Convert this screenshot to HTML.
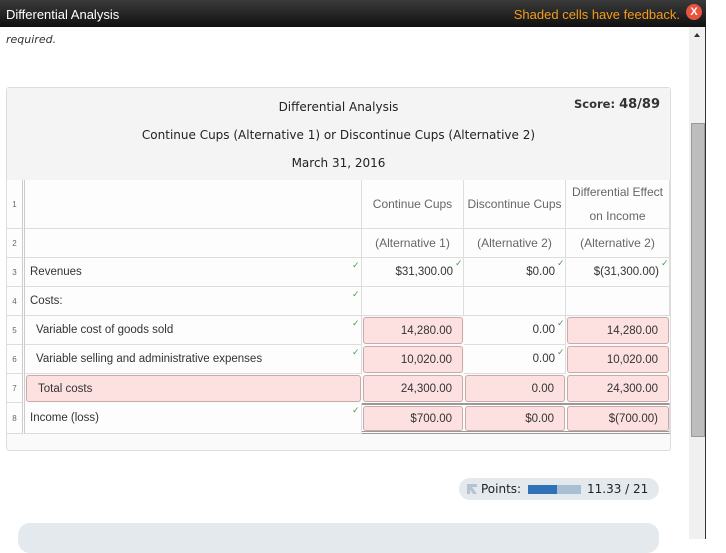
<!DOCTYPE html>
<html><head><style>
*{box-sizing:border-box;margin:0;padding:0}
body{width:726px;height:539px;background:#fff;font-family:"Liberation Sans",sans-serif;position:relative;overflow:hidden;color:#333}
.bar{position:absolute;left:0;top:0;width:706px;height:27px;background:linear-gradient(#3a3a3a,#111);color:#fff;font-size:13px}
.bar .t{position:absolute;left:6px;top:7px;font-size:13px}
.bar .f{position:absolute;right:26px;top:7px;color:#f39c1c;font-size:13px}
.bar .x{position:absolute;right:4px;top:4px;width:16px;height:16px;border-radius:50%;background:#e8533e;color:#fff;font-size:11px;text-align:center;line-height:16px;font-weight:bold}
.req{position:absolute;left:6px;top:33px;font-style:italic;color:#333;font-family:"DejaVu Sans",sans-serif;font-size:11px}
.sb{position:absolute;left:689px;top:27px;width:17px;height:512px;background:#f0f0f0;border-right:1px solid #333}
.sb .th{position:absolute;left:2px;top:96px;width:14px;height:314px;background:#bdbdbd;border:1px solid #999}
.sb .up{position:absolute;left:5px;top:6px;width:0;height:0;border-left:3px solid transparent;border-right:3px solid transparent;border-bottom:4px solid #333}
.panel{position:absolute;left:6px;top:87px;width:665px;height:364px;border:1px solid #ddd;border-radius:3px;background:#fafafa}
.hd{position:absolute;left:0;top:0;width:663px;height:93px;background:#f4f4f4;font-size:12px;color:#222;text-align:center;font-family:"DejaVu Sans",sans-serif}
.hd div{position:absolute;left:0;width:663px}
.score{position:absolute;right:10px;top:9px;font-size:11.5px;font-weight:bold;font-family:"DejaVu Sans",sans-serif}
.score b{font-size:13px}
.c{position:absolute;font-size:11.5px;color:#333;border-right:1px solid #ddd;border-bottom:1px solid #ddd;background:#fdfdfd;display:flex;align-items:center}
.n{font-size:8px;color:#666;justify-content:center;border-right:3px double #ccc}
.h{color:#666;justify-content:center;text-align:center;font-size:12px;line-height:24px}
.r{justify-content:flex-end;padding-right:10px}
.pk{background:#fde1e1;border:1px solid #c9a9a9;border-radius:3px}
.ck{position:absolute;color:#4a9a4a;font-size:9px}
.pts{position:absolute;left:459px;top:478px;width:200px;height:22px;border-radius:11px;background:#e3e9ed;font-size:12px;color:#222;font-family:"DejaVu Sans",sans-serif}
.bot{position:absolute;left:18px;top:523px;width:641px;height:30px;border-radius:12px;background:#e3e9ed}
</style></head><body>
<div class="bar"><span class="t">Differential Analysis</span><span class="f">Shaded cells have feedback.</span><span class="x">X</span></div>
<div class="req">required.</div>
<div class="sb"><div class="up"></div><div class="th"></div></div>
<div class="panel">
<div class="hd"><div style="top:12px">Differential Analysis</div><div style="top:40px">Continue Cups (Alternative 1) or Discontinue Cups (Alternative 2)</div><div style="top:68px">March 31, 2016</div></div>
<div class="score">Score: <b>48/89</b></div>
</div>
<div class="c n" style="left:7px;top:180px;width:18px;height:49px">1</div>
<div class="c" style="left:25px;top:180px;width:337px;height:49px"></div>
<div class="c h" style="left:362px;top:180px;width:102px;height:49px">Continue Cups</div>
<div class="c h" style="left:464px;top:180px;width:102px;height:49px">Discontinue Cups</div>
<div class="c h" style="left:566px;top:180px;width:104px;height:49px">Differential Effect<br>on Income</div>

<div class="c n" style="left:7px;top:229px;width:18px;height:29px">2</div>
<div class="c" style="left:25px;top:229px;width:337px;height:29px"></div>
<div class="c h" style="left:362px;top:229px;width:102px;height:29px">(Alternative 1)</div>
<div class="c h" style="left:464px;top:229px;width:102px;height:29px">(Alternative 2)</div>
<div class="c h" style="left:566px;top:229px;width:104px;height:29px">(Alternative 2)</div>

<div class="c n" style="left:7px;top:258px;width:18px;height:29px">3</div>
<div class="c" style="left:25px;top:258px;width:337px;height:29px;padding-left:5px">Revenues</div>
<div class="c r" style="left:362px;top:258px;width:102px;height:29px">$31,300.00</div>
<div class="c r" style="left:464px;top:258px;width:102px;height:29px">$0.00</div>
<div class="c r" style="left:566px;top:258px;width:104px;height:29px">$(31,300.00)</div>

<div class="c n" style="left:7px;top:287px;width:18px;height:29px">4</div>
<div class="c" style="left:25px;top:287px;width:337px;height:29px;padding-left:5px">Costs:</div>
<div class="c" style="left:362px;top:287px;width:102px;height:29px"></div>
<div class="c" style="left:464px;top:287px;width:102px;height:29px"></div>
<div class="c" style="left:566px;top:287px;width:104px;height:29px"></div>

<div class="c n" style="left:7px;top:316px;width:18px;height:29px">5</div>
<div class="c" style="left:25px;top:316px;width:337px;height:29px;padding-left:11px">Variable cost of goods sold</div>
<div class="c r pk" style="left:363px;top:317px;width:100px;height:27px">14,280.00</div>
<div class="c r" style="left:464px;top:316px;width:102px;height:29px">0.00</div>
<div class="c r pk" style="left:567px;top:317px;width:102px;height:27px">14,280.00</div>

<div class="c n" style="left:7px;top:345px;width:18px;height:29px">6</div>
<div class="c" style="left:25px;top:345px;width:337px;height:29px;padding-left:11px">Variable selling and administrative expenses</div>
<div class="c r pk" style="left:363px;top:346px;width:100px;height:27px">10,020.00</div>
<div class="c r" style="left:464px;top:345px;width:102px;height:29px">0.00</div>
<div class="c r pk" style="left:567px;top:346px;width:102px;height:27px">10,020.00</div>

<div class="c n" style="left:7px;top:374px;width:18px;height:29px">7</div>
<div class="c pk" style="left:26px;top:375px;width:335px;height:27px;padding-left:11px">Total costs</div>
<div class="c r pk" style="left:363px;top:375px;width:100px;height:27px">24,300.00</div>
<div class="c r pk" style="left:465px;top:375px;width:100px;height:27px">0.00</div>
<div class="c r pk" style="left:567px;top:375px;width:102px;height:27px">24,300.00</div>

<div class="c n" style="left:7px;top:403px;width:18px;height:31px">8</div>
<div class="c" style="left:25px;top:403px;width:337px;height:31px;padding-left:5px">Income (loss)</div>
<div class="c" style="left:362px;top:403px;width:308px;height:31px;border-top:2px solid #999;border-bottom:3px double #999"></div>
<div class="c r pk" style="left:363px;top:406px;width:100px;height:25px">$700.00</div>
<div class="c r pk" style="left:465px;top:406px;width:100px;height:25px">$0.00</div>
<div class="c r pk" style="left:567px;top:406px;width:102px;height:25px">$(700.00)</div>

<span class="ck" style="left:352px;top:260px">✓</span>
<span class="ck" style="left:352px;top:289px">✓</span>
<span class="ck" style="left:352px;top:318px">✓</span>
<span class="ck" style="left:352px;top:347px">✓</span>
<span class="ck" style="left:352px;top:405px">✓</span>
<span class="ck" style="left:455px;top:258px">✓</span>
<span class="ck" style="left:557px;top:258px">✓</span>
<span class="ck" style="left:661px;top:258px">✓</span>
<span class="ck" style="left:557px;top:318px">✓</span>
<span class="ck" style="left:557px;top:347px">✓</span>

<div class="pts">
<span style="position:absolute;left:8px;top:6px;width:10px;height:10px;background:#b5c3cf;clip-path:polygon(0 0,100% 0,100% 30%,50% 30%,100% 100%,60% 100%,30% 55%,30% 100%,0 100%)"></span>
<span style="position:absolute;left:22px;top:4px">Points:</span>
<span style="position:absolute;left:69px;top:7px;width:53px;height:9px;background:#a9c0d3"></span>
<span style="position:absolute;left:69px;top:7px;width:29px;height:9px;background:#2f72b8"></span>
<span style="position:absolute;left:128px;top:4px">11.33 / 21</span>
</div>
<div class="bot"></div>
</body></html>
